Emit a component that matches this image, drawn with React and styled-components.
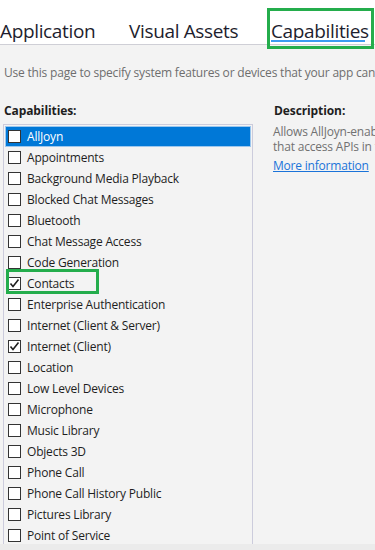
import React from 'react';
import styled, { createGlobalStyle } from 'styled-components';

const GlobalStyle = createGlobalStyle`
  html, body {
    margin: 0;
    padding: 0;
    background: #f3f3f3;
    font-family: "Open Sans", "Noto Sans", sans-serif;
    overflow: hidden;
  }
`;

const Page = styled.div`
  width: 375px;
  height: 550px;
  display: flex;
  flex-direction: column;
  overflow: hidden;
`;

const Header = styled.div`
  height: 44px;
  background: #ffffff;
  border-bottom: 1px solid #cfcfd6;
  display: flex;
  align-items: flex-end;
  flex-shrink: 0;
`;

const Tab = styled.div`
  position: relative;
  width: ${(p) => p.w}px;
  flex-shrink: 0;
  font-size: 19px;
  line-height: 24px;
  color: #1e1e2e;
  padding-bottom: 1px;
  padding-left: ${(p) => (p.active ? 4 : 0)}px;
  box-sizing: border-box;
  letter-spacing: -0.35px;
  white-space: nowrap;
`;

const TabUnderline = styled.div`
  position: absolute;
  left: 4px;
  right: 10px;
  bottom: 2px;
  height: 2px;
  background: #3c9bf0;
`;

const Highlight = styled.div`
  position: absolute;
  border: 3px solid #24ad4c;
  pointer-events: none;
`;

const Body = styled.div`
  flex: 1;
  display: flex;
  flex-direction: column;
  padding: 0 0 0 3px;
  min-height: 0;
`;

const Intro = styled.div`
  font-size: 12px;
  color: #6e6e6e;
  margin-top: 19px;
  padding-left: 1px;
  white-space: nowrap;
  letter-spacing: -0.2px;
`;

const Columns = styled.div`
  display: flex;
  margin-top: 21px;
  flex: 1;
  min-height: 0;
`;

const LeftCol = styled.div`
  width: 250px;
  flex-shrink: 0;
  display: flex;
  flex-direction: column;
  min-height: 0;
`;

const RightCol = styled.div`
  margin-left: 20px;
  display: flex;
  flex-direction: column;
  white-space: nowrap;
  min-width: 0;
`;

const Label = styled.div`
  font-size: 12px;
  font-weight: 700;
  color: #1e1e1e;
  padding-left: 1px;
  height: 18px;
  line-height: 18px;
  letter-spacing: -0.1px;
`;

const ListBox = styled.div`
  margin-top: 4px;
  flex: 1;
  border: 1px solid #ccccdc;
  border-bottom: none;
  padding: 1px;
  overflow: hidden;
  min-height: 0;
`;

const Row = styled.div`
  position: relative;
  height: 21px;
  display: flex;
  align-items: center;
  gap: 6px;
  padding-left: 3px;
  box-sizing: border-box;
  background: ${(p) => (p.selected ? '#0078d7' : 'transparent')};
  outline: ${(p) => (p.selected ? '1px solid #9cc7ee' : 'none')};
  outline-offset: -1px;
  color: ${(p) => (p.selected ? '#ffffff' : '#1e1e1e')};
  font-size: 12px;
  letter-spacing: -0.2px;
  white-space: nowrap;
`;

const Box = styled.div`
  width: 13px;
  height: 13px;
  box-sizing: border-box;
  border: 1px solid #333333;
  background: #ffffff;
  display: flex;
  align-items: center;
  justify-content: center;
  flex-shrink: 0;
`;

const DescText = styled.div`
  font-size: 12px;
  line-height: 15px;
  color: #717171;
  margin-top: 4px;
  letter-spacing: -0.2px;
`;

const MoreLink = styled.a`
  font-size: 12px;
  color: #1a73d9;
  text-decoration: underline;
  margin-top: 3px;
  letter-spacing: -0.2px;
`;

const Footer = styled.div`
  height: 6px;
  background: #ebebeb;
  flex-shrink: 0;
`;

const Check = () => (
  <svg width="11" height="11" viewBox="0 0 11 11">
    <path d="M1.5 5.5 L4 8.5 L9.5 1.5" fill="none" stroke="#1e1e1e" strokeWidth="1.6" />
  </svg>
);

const items = [
  { name: 'AllJoyn', selected: true },
  { name: 'Appointments' },
  { name: 'Background Media Playback' },
  { name: 'Blocked Chat Messages' },
  { name: 'Bluetooth' },
  { name: 'Chat Message Access' },
  { name: 'Code Generation' },
  { name: 'Contacts', checked: true, marked: true },
  { name: 'Enterprise Authentication' },
  { name: 'Internet (Client & Server)' },
  { name: 'Internet (Client)', checked: true },
  { name: 'Location' },
  { name: 'Low Level Devices' },
  { name: 'Microphone' },
  { name: 'Music Library' },
  { name: 'Objects 3D' },
  { name: 'Phone Call' },
  { name: 'Phone Call History Public' },
  { name: 'Pictures Library' },
  { name: 'Point of Service' },
];

const App = () => (
  <Page>
    <GlobalStyle />
    <Header>
      <Tab w={129}>Application</Tab>
      <Tab w={138}>Visual Assets</Tab>
      <Tab w={108} active>
        Capabilities
        <TabUnderline />
        <Highlight style={{ left: 0, top: -11, width: 101, height: 35 }} />
      </Tab>
    </Header>
    <Body>
      <Intro>Use this page to specify system features or devices that your app can use.</Intro>
      <Columns>
        <LeftCol>
          <Label>Capabilities:</Label>
          <ListBox>
            {items.map((it) => (
              <Row key={it.name} selected={it.selected}>
                <Box>{it.checked && <Check />}</Box>
                {it.name}
                {it.marked && (
                  <Highlight style={{ left: 1, top: -4, width: 87, height: 19 }} />
                )}
              </Row>
            ))}
          </ListBox>
        </LeftCol>
        <RightCol>
          <Label>Description:</Label>
          <DescText>
            Allows AllJoyn-enabled apps to discover and interact
            <br />
            that access APIs in the AllJoyn namespace.
          </DescText>
          <MoreLink href="#">More information</MoreLink>
        </RightCol>
      </Columns>
    </Body>
    <Footer />
  </Page>
);

export default App;
